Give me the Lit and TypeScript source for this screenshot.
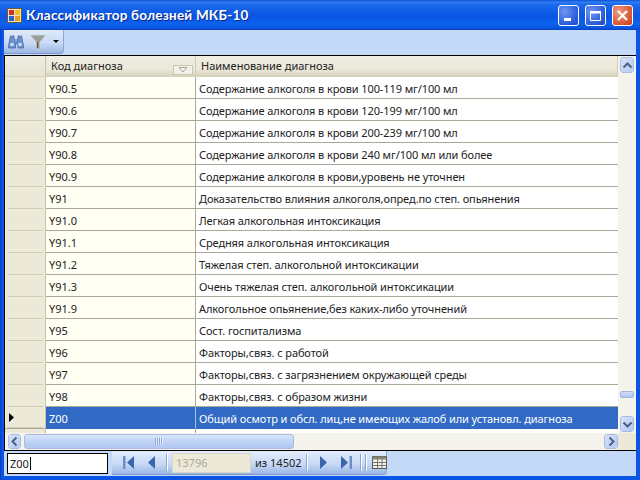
import { LitElement, html, css, svg } from "lit";
import { customElement } from "lit/decorators.js";

const ROWS: [string, string][] = [
  ["Y90.5", "Содержание алкоголя в крови 100-119 мг/100 мл"],
  ["Y90.6", "Содержание алкоголя в крови 120-199 мг/100 мл"],
  ["Y90.7", "Содержание алкоголя в крови 200-239 мг/100 мл"],
  ["Y90.8", "Содержание алкоголя в крови 240 мг/100 мл или более"],
  ["Y90.9", "Содержание алкоголя в крови,уровень не уточнен"],
  ["Y91", "Доказательство влияния алкоголя,опред.по степ. опьянения"],
  ["Y91.0", "Легкая алкогольная интоксикация"],
  ["Y91.1", "Средняя алкогольная интоксикация"],
  ["Y91.2", "Тяжелая степ. алкогольной интоксикации"],
  ["Y91.3", "Очень тяжелая степ. алкогольной интоксикации"],
  ["Y91.9", "Алкогольное опьянение,без каких-либо уточнений"],
  ["Y95", "Сост. госпитализма"],
  ["Y96", "Факторы,связ. с работой"],
  ["Y97", "Факторы,связ. с загрязнением окружающей среды"],
  ["Y98", "Факторы,связ. с образом жизни"],
  ["Z00", "Общий осмотр и обсл. лиц,не имеющих жалоб или установл. диагноза"],
];

const arrow = (d: string) => html`<svg width="11" height="11" viewBox="0 0 11 11"><path d=${d} fill="none" stroke="#4d6185" stroke-width="2"/></svg>`;

@customElement("app-root")
export class AppRoot extends LitElement {
  static styles = css`
    :host { display: block; width: 640px; height: 480px; overflow: hidden; font-family: "Noto Sans", "DejaVu Sans", sans-serif; font-size: 11px; color: #222; }
    .win { width: 640px; height: 480px; display: flex; flex-direction: column; background: linear-gradient(90deg, #0a3cc0 0, #0b55e6 2px, #0b55e6 636px); }
    .title { height: 30px; flex: none; display: flex; align-items: center; padding: 0 7px 0 7px; gap: 4px;
      background: linear-gradient(#0a4fd8 0, #2f7cf0 2px, #1a68ec 5px, #0a55e4 16px, #0c62ee 24px, #0a55e0 28px, #0640bc 30px); }
    .title span { flex: 1; color: #fff; font: bold 13.5px "Lato", "DejaVu Sans", sans-serif; letter-spacing: 0.2px; text-shadow: 1px 1px 0 #0a2a90; }
    .wb { width: 21px; height: 21px; box-sizing: border-box; border: 1px solid #fff; border-radius: 3px; margin-left: 2px; display: flex; align-items: center; justify-content: center;
      background: radial-gradient(circle at 30% 30%, #6d97f2, #2a5bd8 70%, #1f46c0); }
    .wb.x { background: radial-gradient(circle at 30% 30%, #ee9a80, #d8552f 70%, #c03a18); }
    .body { flex: 1; margin: 0 4px 4px 4px; display: flex; flex-direction: column; min-height: 0; background: #c3d9f7; }
    .tb { height: 25px; flex: none; display: flex; background: #c3d9f7; }
    .tbi { width: 60px; height: 24px; box-sizing: border-box; display: flex; align-items: center; padding-left: 4px; gap: 1px; border-radius: 0 0 4px 0;
      background: linear-gradient(#dfeafb, #c8daf5 55%, #9db8e4); border-right: 1px solid #8ea8d4; border-bottom: 1px solid #7f9aca; }
    .tri { width: 0; height: 0; border: 3px solid transparent; border-top: 3px solid #000; border-bottom: 0; margin-left: 5px; }
    .main { height: 396px; flex: none; box-sizing: border-box; border: 1px solid #000; border-width: 1px 0 1px 1px; display: grid; grid-template-columns: 1fr 18px; grid-template-rows: 1fr 17px; background: #f3f2ea; }
    .grid { overflow: hidden; min-width: 0; min-height: 0; background: #fff; }
    .r { display: grid; grid-template-columns: 41px 150px 1fr; height: 22px; box-sizing: border-box; }
    .rh { background: #ece9d8; border-right: 1px solid #c9c5ac; position: relative; display: flex; align-items: center; padding-left: 4px; }
    .rh::after { content: ""; position: absolute; left: 3px; right: 2px; bottom: 0; height: 1px; background: #cfccb8; }
    .c { display: flex; align-items: center; padding: 1px 0 0 3px; white-space: nowrap; border-bottom: 1px solid #aca899; box-sizing: border-box; overflow: hidden; }
    .c1 { background: #fffff4; border-right: 1px solid #aca899; }
    .c2 { background: #fff; letter-spacing: -0.1px; }
    .hd { height: 21px; }
    .hd .c { background: linear-gradient(#f0eee2, #ece9da 70%, #d9d6c3); border-right: 1px solid #cfccb8; border-bottom: 2px solid #d6d2bd; padding: 0 0 0 5px; position: relative; letter-spacing: 0; }
    .hd .rh { background: linear-gradient(#f0eee2, #e6e3d2); border-bottom: 1px solid #d6d2bd; }
    .hd .rh::after { display: none; }
    .sort { position: absolute; right: 2px; bottom: 0; width: 20px; height: 10px; box-sizing: border-box; background: #f2f1e8; border: 1px solid #c9c6b2; display: flex; justify-content: center; align-items: center; }
    .r.sel .c { background: #316ac5; color: #fff; border-color: #316ac5; }
    .r.sel .c1 { border-right-color: #a8c0e8; }
    .r.sel .rh { border-bottom: 1px solid #aca899; }
    .r.tail { height: 4px; }
    .r.tail .c { border-bottom: 0; padding: 0; }
    .r.tail .rh::after { display: none; }
    .vs { display: flex; flex-direction: column; align-items: center; padding: 1px 0; background: #f4f3ec; }
    .sb { box-sizing: border-box; flex: none; border: 1px solid #fff; border-radius: 3px; background: linear-gradient(135deg, #d6e2fb, #b6c9f3); display: flex; align-items: center; justify-content: center; outline: 1px solid #a9bce0; outline-offset: -1px; }
    .sbv { width: 14px; height: 16px; }
    .sbh { width: 13px; height: 15px; }
    .vtrack { flex: 1; align-self: stretch; display: flex; flex-direction: column; justify-content: flex-end; align-items: center; padding-bottom: 18px; }
    .vthumb { width: 14px; height: 7px; border-radius: 2px; background: linear-gradient(#cfdcf8, #b3c6f1); border: 1px solid #a0b5df; box-sizing: border-box; }
    .hs { display: flex; align-items: center; background: #f4f3ec; padding: 0 0 0 3px; min-width: 0; }
    .hthumb { width: 270px; height: 15px; margin-left: 3px; box-sizing: border-box; border: 1px solid #a9bce0; border-radius: 3px; background: linear-gradient(#d8e4fb, #bcd0f6 60%, #b1c7f2); display: flex; align-items: center; justify-content: center; }
    .grip { width: 8px; height: 7px; background: repeating-linear-gradient(90deg, #8fa7d8 0 1px, #e6eefc 1px 2px); }
    .hsp { flex: 1; }
    .corner { background: #ece9d8; }
    .st { flex: 1; display: flex; min-height: 0; background: #c3d9f7; align-items: flex-start; }
    .inp { width: 101px; height: 21px; margin: 2px 0 0 3px; box-sizing: border-box; border: 1px solid #000; background: #fff; padding-left: 2px; display: flex; align-items: center; }
    .caret { width: 1px; height: 13px; background: #000; margin-left: 1px; }
    .nav { width: 275px; margin-left: 4px; height: 24px; box-sizing: border-box; padding: 0 0 0 5px; display: flex; align-items: center; background: linear-gradient(#e3edfc, #c8daf6 55%, #9ab6e3); border-radius: 0 0 4px 0; border-right: 1px solid #8ea8d4; border-bottom: 1px solid #7f9aca; flex: none; }
    .nb { width: 23px; display: flex; justify-content: center; align-items: center; flex: none; }
    .sp { width: 1px; height: 17px; background: #8ea8d4; border-right: 1px solid #fff; margin: 0 3px; flex: none; }
    .cnt { width: 79px; height: 20px; box-sizing: border-box; background: #ece9d8; border: 1px solid #d8d6c6; color: #aca899; padding-left: 3px; display: flex; align-items: center; margin-left: 1px; flex: none; }
    .of { width: 52px; padding-left: 4px; box-sizing: border-box; white-space: nowrap; flex: none; }
    .gic { margin-left: 4px; display: flex; }
  `;

  renderFlag() {
    return svg`<svg width="15" height="15" viewBox="0 0 15 15">
      <rect x="0.5" y="0.5" width="14" height="14" fill="#e8e4d0" stroke="#7a5a20"/>
      <rect x="2" y="2" width="5" height="5" fill="#d83020"/><rect x="8" y="2" width="5" height="5" fill="#f0c020"/>
      <rect x="2" y="8" width="5" height="5" fill="#3060d0"/><rect x="8" y="8" width="5" height="5" fill="#e8a020"/></svg>`;
  }

  render() {
    return html`<div class="win">
      <div class="title">
        ${this.renderFlag()}
        <span>Классификатор болезней МКБ-10</span>
        <div class="wb"><svg width="13" height="13" viewBox="0 0 13 13"><rect x="2" y="9" width="7" height="3" fill="#fff"/></svg></div>
        <div class="wb"><svg width="13" height="13" viewBox="0 0 13 13"><path d="M1.500 2.500h10v9h-10z" fill="none" stroke="#fff"/><rect x="1" y="2" width="11" height="2.500" fill="#fff"/></svg></div>
        <div class="wb x"><svg width="13" height="13" viewBox="0 0 13 13"><path d="M2 2l9 9M11 2l-9 9" stroke="#fff" stroke-width="2.200"/></svg></div>
      </div>
      <div class="body">
        <div class="tb"><div class="tbi">
          <svg width="16" height="16" viewBox="0 0 16 16"><path d="M2.500 2h3.500v3h1v3h2V5h1V2h3.500l2 10v2h-5.500V10h-1.500h-1v4H.5v-2z" fill="#6f94d2" stroke="#3f5f9f" stroke-width=".7"/><rect x="2.500" y="9" width="3" height="3" fill="#cfe0f6"/><rect x="10.500" y="9" width="3" height="3" fill="#cfe0f6"/></svg>
          <svg width="18" height="18" viewBox="0 0 18 18" style="margin-left:4px"><path d="M1 2h16l-6 7v8l-4-2V9z" fill="#9a9e9a" stroke="#d8dcd8" stroke-width=".8"/><path d="M8 9v6l1 .6V9z" fill="#555"/></svg>
          <div class="tri"></div>
        </div></div>
        <div class="main">
          <div class="grid">
            <div class="r hd"><div class="rh"></div>
              <div class="c">Код диагноза<div class="sort"><svg width="10" height="6" viewBox="0 0 10 6"><path d="M1 .5h8L5 5z" fill="none" stroke="#aca899"/></svg></div></div>
              <div class="c">Наименование диагноза</div></div>
            ${ROWS.map((r, i) => html`<div class="r ${i === ROWS.length - 1 ? "sel" : ""}">
              <div class="rh">${i === ROWS.length - 1 ? html`<svg width="6" height="9" viewBox="0 0 6 9"><path d="M0 0l5 4.500L0 9z" fill="#000"/></svg>` : ""}</div>
              <div class="c c1">${r[0]}</div><div class="c c2">${r[1]}</div></div>`)}
            <div class="r tail"><div class="rh"></div><div class="c c1"></div><div class="c c2"></div></div>
          </div>
          <div class="vs">
            <div class="sb sbv">${arrow("M1.500 7.500l4-4 4 4")}</div>
            <div class="vtrack"><div class="vthumb"></div></div>
            <div class="sb sbv">${arrow("M1.500 3.500l4 4 4-4")}</div>
          </div>
          <div class="hs">
            <div class="sb sbh">${arrow("M7.500 1.500l-4 4 4 4")}</div>
            <div class="hthumb"><div class="grip"></div></div>
            <div class="hsp"></div>
            <div class="sb sbh" style="width:14px">${arrow("M3.500 1.500l4 4-4 4")}</div>
          </div>
          <div class="corner"></div>
        </div>
        <div class="st">
          <div class="inp">Z00<div class="caret"></div></div>
          <div class="nav">
            <div class="nb"><svg width="12" height="13" viewBox="0 0 12 13"><rect x="0" y="0" width="2.500" height="13" fill="#6d8fc8"/><path d="M11 0v13L4 6.500z" fill="#3a66ae"/></svg></div>
            <div class="nb"><svg width="8" height="13" viewBox="0 0 8 13"><path d="M7 0v13L0 6.500z" fill="#3a66ae"/></svg></div>
            <div class="sp"></div>
            <div class="cnt">13796</div>
            <div class="of">из 14502</div>
            <div class="sp"></div>
            <div class="nb"><svg width="8" height="13" viewBox="0 0 8 13"><path d="M1 0v13l7-6.500z" fill="#3a66ae"/></svg></div>
            <div class="nb"><svg width="12" height="13" viewBox="0 0 12 13"><path d="M1 0v13l7-6.500z" fill="#3a66ae"/><rect x="9.500" y="0" width="2.500" height="13" fill="#6d8fc8"/></svg></div>
            <div class="sp"></div><div class="sp" style="margin:0"></div>
            <div class="gic"><svg width="16" height="14" viewBox="0 0 16 14"><rect x="1.500" y="0.500" width="14" height="12" fill="#f4f2e6" stroke="#555"/><rect x="1.500" y="0.500" width="14" height="3" fill="#8a8a70"/><path d="M1.500 6.500h14M1.500 9.500h14M6.500 .5v12M11 .5v12" stroke="#777" fill="none"/></svg></div>
          </div>
        </div>
      </div>
    </div>`;
  }
}
